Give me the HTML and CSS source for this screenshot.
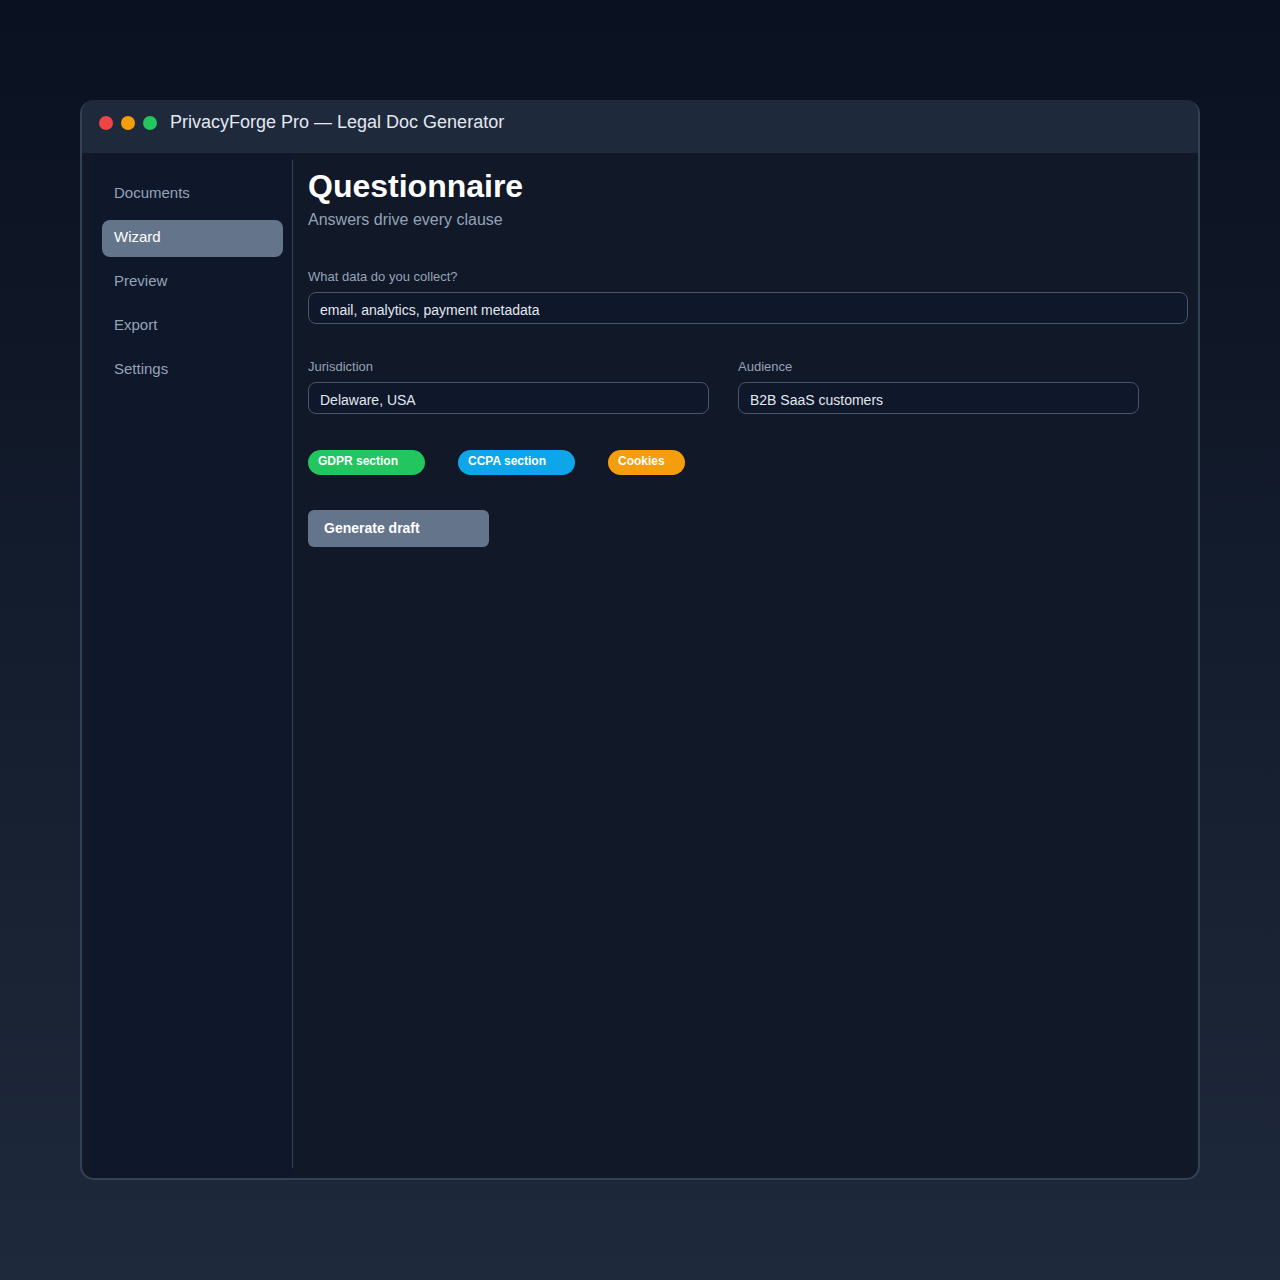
FILE: index.html
```html
<!DOCTYPE html>
<html lang="en">
<head>
  <meta charset="UTF-8" />
  <title>PrivacyForge Pro — Legal Doc Generator</title>
  <link rel="stylesheet" href="styles.css">
</head>
<body>
  <div class="window">
    <div class="titlebar">
      <span class="dot red"></span>
      <span class="dot yellow"></span>
      <span class="dot green"></span>
      <span class="title">PrivacyForge Pro — Legal Doc Generator</span>
    </div>

    <div class="body">
      <nav class="sidebar">
        <div class="nav-item">Documents</div>
        <div class="nav-item active">Wizard</div>
        <div class="nav-item">Preview</div>
        <div class="nav-item">Export</div>
        <div class="nav-item">Settings</div>
      </nav>

      <main class="main">
        <h1>Questionnaire</h1>
        <p class="subtitle">Answers drive every clause</p>

        <div class="field wide">
          <label>What data do you collect?</label>
          <div class="input">email, analytics, payment metadata</div>
        </div>

        <div class="row">
          <div class="field">
            <label>Jurisdiction</label>
            <div class="input">Delaware, USA</div>
          </div>
          <div class="field">
            <label>Audience</label>
            <div class="input">B2B SaaS customers</div>
          </div>
        </div>

        <div class="pills">
          <span class="pill gdpr">GDPR section</span>
          <span class="pill ccpa">CCPA section</span>
          <span class="pill cookies">Cookies</span>
        </div>

        <button class="generate">Generate draft</button>
      </main>
    </div>
  </div>
</body>
</html>
```

FILE: styles.css
```css
body {
  margin: 0;
  padding: 0;
  min-height: 1280px;
  font-family: 'Liberation Sans', Arial, sans-serif;
  background: linear-gradient(180deg, #0a1120, #1e293b);
  color: #e2e8f0;
}
.window {
  width: 1120px;
  height: 1080px;
  margin: 100px 0 0 80px;
  box-sizing: border-box;
  border: 2px solid #334155;
  border-top: none;
  border-radius: 14px;
  overflow: hidden;
  background: #111827;
  display: flex;
  flex-direction: column;
}
.titlebar {
  height: 53px;
  box-sizing: border-box;
  flex-shrink: 0;
  margin: 0 -2px;
  background: #1e293b;
  display: flex;
  align-items: center;
  padding: 0 19px 8px;
  gap: 8px;
}
.dot {
  width: 14px;
  height: 14px;
  border-radius: 50%;
}
.dot.red { background: #ef4444; }
.dot.yellow { background: #f59e0b; }
.dot.green { background: #22c55e; }
.title {
  margin-left: 5px;
  font-size: 18px;
  color: #e2e8f0;
}
.body {
  flex: 1;
  display: flex;
  padding-left: 10px;
}
.sidebar {
  width: 200px;
  background: #0f172a;
  padding: 23px 9px 0 10px;
  box-sizing: border-box;
  display: flex;
  flex-direction: column;
  gap: 7px;
}
.nav-item {
  height: 37px;
  line-height: 33px;
  padding-left: 12px;
  border-radius: 8px;
  font-size: 15px;
  color: #94a3b8;
}
.nav-item.active {
  background: #64748b;
  color: #fff;
}
.main {
  flex: 1;
  margin: 7px 0 10px;
  border-left: 1px solid #334155;
  padding: 7px 10px 0 15px;
}
h1 {
  margin: 0;
  font-size: 32px;
  line-height: 38px;
  font-weight: 700;
  color: #fff;
}
.subtitle {
  margin: 5px 0 0;
  font-size: 16px;
  line-height: 20px;
  color: #94a3b8;
}
.field label {
  display: block;
  font-size: 13px;
  line-height: 16px;
  color: #94a3b8;
  margin-bottom: 7px;
}
.field.wide {
  margin-top: 39px;
}
.input {
  height: 32px;
  box-sizing: border-box;
  border: 1px solid #475569;
  border-radius: 8px;
  background: #0f172a;
  padding: 2px 11px 0;
  line-height: 30px;
  font-size: 14px;
  color: #e2e8f0;
}
.row {
  margin-top: 35px;
  display: grid;
  grid-template-columns: 401px 401px;
  gap: 29px;
}
.pills {
  margin-top: 36px;
  display: flex;
  gap: 33px;
}
.pill {
  height: 25px;
  box-sizing: border-box;
  padding: 4px 10px 0;
  border-radius: 13px;
  font-size: 12px;
  font-weight: 700;
  color: #fff;
}
.pill.gdpr { background: #22c55e; width: 117px; }
.pill.ccpa { background: #0ea5e9; width: 117px; }
.pill.cookies { background: #f59e0b; width: 77px; }
.generate {
  display: block;
  margin-top: 35px;
  width: 181px;
  height: 37px;
  border: none;
  border-radius: 6px;
  background: #64748b;
  color: #fff;
  font-family: inherit;
  font-size: 14px;
  font-weight: 700;
  text-align: left;
  padding: 0 16px 2px;
}
```
